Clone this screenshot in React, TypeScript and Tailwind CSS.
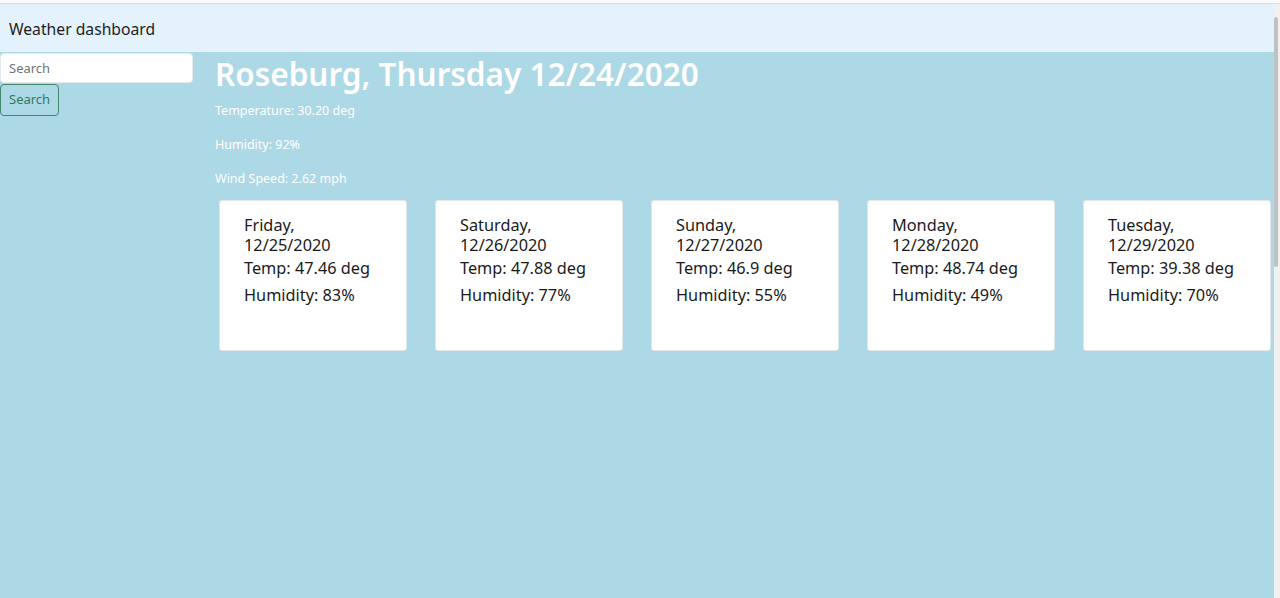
import React from "react";

const days = [
  { day: "Friday,", date: "12/25/2020", temp: "47.46", hum: "83" },
  { day: "Saturday,", date: "12/26/2020", temp: "47.88", hum: "77" },
  { day: "Sunday,", date: "12/27/2020", temp: "46.9", hum: "55" },
  { day: "Monday,", date: "12/28/2020", temp: "48.74", hum: "49" },
  { day: "Tuesday,", date: "12/29/2020", temp: "39.38", hum: "70" },
];

export default function App() {
  return (
    <div
      className="w-[1280px] h-[598px] overflow-hidden flex flex-col bg-[#f7f7f7]"
      style={{ fontFamily: '"Noto Sans", "Open Sans", sans-serif' }}
    >
      <div className="h-[4px] border-b border-[#dcdcdc] bg-[#fafafa]" />
      <div className="flex flex-1 min-h-0">
        <div className="flex-1 flex flex-col min-w-0">
          <nav className="h-[48px] bg-[#e3f2fd] flex items-center px-[9px] pt-[3px]">
            <span className="text-[15.7px] text-[#1e1e1e]">Weather dashboard</span>
          </nav>
          <div className="flex-1 bg-[#add8e6] flex">
            <div className="w-[194px] flex flex-col items-start gap-[1px] pt-[1px]">
              <input
                className="w-[193px] h-[30px] bg-white rounded-[4px] border border-[#e6eaec] px-[8px] text-[13px] placeholder:text-[#6c757d] outline-none"
                placeholder="Search"
              />
              <button className="h-[32px] px-[8px] rounded-[4px] border border-[#3d8a6a] text-[13px] text-[#2e7d5c] bg-transparent">
                Search
              </button>
            </div>
            <div className="flex-1 pl-[21px] pt-[2px] text-white">
              <h1 className="text-[31.5px] font-semibold leading-[40px]">
                Roseburg, Thursday 12/24/2020
              </h1>
              <div className="text-[12.5px] leading-[18px] mt-[8px] flex flex-col gap-[16px]">
                <p>Temperature: 30.20 deg</p>
                <p>Humidity: 92%</p>
                <p>Wind Speed: 2.62 mph</p>
              </div>
              <div className="flex gap-[28px] mt-[12px] pl-[4px]">
                {days.map((d) => (
                  <div
                    key={d.date}
                    className="w-[188px] h-[151px] shrink-0 bg-white rounded-[3px] border border-[#e2e8ea] pl-[24px] pt-[14px] text-[#1a1a1a] text-[16.3px]"
                  >
                    <div className="leading-[20px]">{d.day}</div>
                    <div className="leading-[20px]">{d.date}</div>
                    <div className="leading-[20px] mt-[3px]">Temp: {d.temp} deg</div>
                    <div className="leading-[20px] mt-[7px]">Humidity: {d.hum}%</div>
                  </div>
                ))}
              </div>
            </div>
          </div>
        </div>
        <div className="w-[6px] bg-[#f1f1f1] flex flex-col pt-[13px]">
          <div className="h-[250px] w-[4px] bg-[#c1c1c1] rounded-[2px]" />
        </div>
      </div>
    </div>
  );
}
